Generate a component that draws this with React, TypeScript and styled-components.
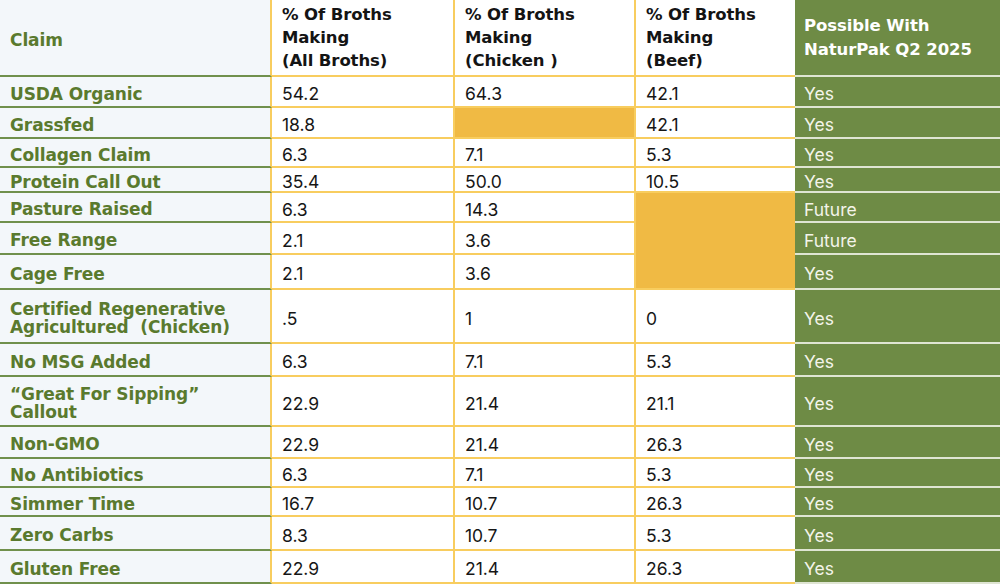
import React from "react"
import styled, { createGlobalStyle } from "styled-components"

const GlobalStyle = createGlobalStyle`
    html, body {
        margin: 0;
        padding: 0;
        background: #ffffff;
    }
    body {
        font-family: Inter, "Noto Sans", "DejaVu Sans", sans-serif;
    }
`

const HEAVY = `"DejaVu Sans", Inter, sans-serif`

const ROW_HEIGHTS = [77, 31, 31, 29, 25, 30, 32, 35, 54, 33, 50, 32, 29, 29, 34, 33]

const Grid = styled.div`
    display: grid;
    width: 1000px;
    height: 584px;
    overflow: hidden;
    grid-template-columns: 272px 183px 181px 159px 205px;
    grid-template-rows: ${ROW_HEIGHTS.map(h => h + "px").join(" ")};
`

const ClaimCell = styled.div`
    box-sizing: border-box;
    display: flex;
    align-items: center;
    padding: 4px 10px 0 10px;
    background: #f3f7fa;
    border-bottom: 2px solid #70904c;
    border-right: 2px solid #f8cd5f;
    color: #5a7a2e;
    font-family: ${HEAVY};
    font-weight: 700;
    font-size: 17px;
    line-height: 18px;
    letter-spacing: -0.1px;
`

const HeadCell = styled.div<{ $last?: boolean }>`
    box-sizing: border-box;
    display: flex;
    align-items: center;
    padding: 0 4px 0 10px;
    background: #ffffff;
    border-bottom: 2px solid #f8cd5f;
    border-right: ${p => (p.$last ? "none" : "2px solid #f8cd5f")};
    color: #141414;
    font-family: ${HEAVY};
    font-weight: 700;
    font-size: 16.5px;
    line-height: 23px;
    letter-spacing: -0.1px;
`

const ValueCell = styled.div<{ $last?: boolean; $blank?: boolean; $span?: number }>`
    box-sizing: border-box;
    display: flex;
    align-items: center;
    padding: 5px 10px 0 10px;
    background: ${p => (p.$blank ? "#f0ba44" : "#ffffff")};
    border-bottom: 2px solid #f8cd5f;
    border-right: ${p => (p.$last ? "none" : "2px solid #f8cd5f")};
    grid-row: ${p => (p.$span ? `span ${p.$span}` : "auto")};
    color: #161616;
    font-size: 17.5px;
    line-height: 18px;
`

const StatusHead = styled.div`
    box-sizing: border-box;
    display: flex;
    align-items: center;
    padding: 0 4px 0 9px;
    background: #6e8b45;
    border-bottom: 2px solid #dfe5d3;
    color: #ffffff;
    font-family: ${HEAVY};
    font-weight: 700;
    font-size: 16.5px;
    line-height: 24px;
    letter-spacing: -0.1px;
`

const StatusCell = styled.div`
    box-sizing: border-box;
    display: flex;
    align-items: center;
    padding: 5px 10px 0 9px;
    background: #6e8b45;
    border-bottom: 2px solid #dfe5d3;
    color: #f4f4ea;
    font-size: 17.5px;
    line-height: 18px;
`

type Row = {
    claim: React.ReactNode
    all: string
    chicken: string | null
    beef: string | null | "span"
    status: string
}

const rows: Row[] = [
    { claim: "USDA Organic", all: "54.2", chicken: "64.3", beef: "42.1", status: "Yes" },
    { claim: "Grassfed", all: "18.8", chicken: null, beef: "42.1", status: "Yes" },
    { claim: "Collagen Claim", all: "6.3", chicken: "7.1", beef: "5.3", status: "Yes" },
    { claim: "Protein Call Out", all: "35.4", chicken: "50.0", beef: "10.5", status: "Yes" },
    { claim: "Pasture Raised", all: "6.3", chicken: "14.3", beef: null, status: "Future" },
    { claim: "Free Range", all: "2.1", chicken: "3.6", beef: "span", status: "Future" },
    { claim: "Cage Free", all: "2.1", chicken: "3.6", beef: "span", status: "Yes" },
    {
        claim: (<>Certified Regenerative<br />Agricultured&nbsp; (Chicken)</>),
        all: ".5", chicken: "1", beef: "0", status: "Yes",
    },
    { claim: "No MSG Added", all: "6.3", chicken: "7.1", beef: "5.3", status: "Yes" },
    {
        claim: (<>“Great For Sipping”<br />Callout</>),
        all: "22.9", chicken: "21.4", beef: "21.1", status: "Yes",
    },
    { claim: "Non-GMO", all: "22.9", chicken: "21.4", beef: "26.3", status: "Yes" },
    { claim: "No Antibiotics", all: "6.3", chicken: "7.1", beef: "5.3", status: "Yes" },
    { claim: "Simmer Time", all: "16.7", chicken: "10.7", beef: "26.3", status: "Yes" },
    { claim: "Zero Carbs", all: "8.3", chicken: "10.7", beef: "5.3", status: "Yes" },
    { claim: "Gluten Free", all: "22.9", chicken: "21.4", beef: "26.3", status: "Yes" },
]

const App = () => {
    return (
        <>
            <GlobalStyle />
            <Grid>
                <ClaimCell>Claim</ClaimCell>
                <HeadCell>% Of Broths<br />Making<br />(All Broths)</HeadCell>
                <HeadCell>% Of Broths<br />Making<br />(Chicken )</HeadCell>
                <HeadCell $last>% Of Broths<br />Making<br />(Beef)</HeadCell>
                <StatusHead>Possible With<br />NaturPak Q2 2025</StatusHead>

                {rows.map((r, i) => (
                    <React.Fragment key={i}>
                        <ClaimCell>{r.claim}</ClaimCell>
                        <ValueCell>{r.all}</ValueCell>
                        <ValueCell $blank={r.chicken === null}>{r.chicken}</ValueCell>
                        {r.beef === "span" ? null : r.beef === null ? (
                            <ValueCell $last $blank $span={3} />
                        ) : (
                            <ValueCell $last>{r.beef}</ValueCell>
                        )}
                        <StatusCell>{r.status}</StatusCell>
                    </React.Fragment>
                ))}
            </Grid>
        </>
    )
}

export default App
